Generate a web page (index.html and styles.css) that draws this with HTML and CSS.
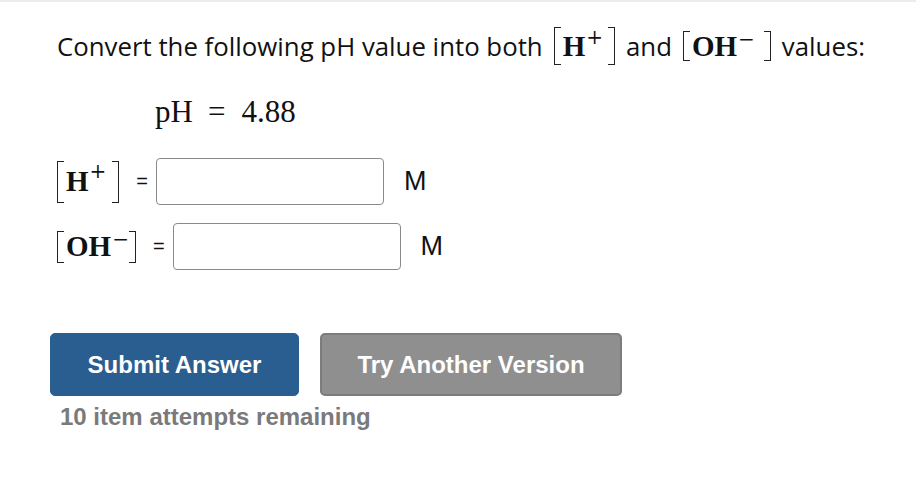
FILE: index.html
```html
<!DOCTYPE html>
<html>
<head>
<meta charset="utf-8">
<link rel="stylesheet" href="styles.css">
</head>
<body>
<div class="topbar"></div>
<div class="page">
  <p class="question"><span>Convert the following pH value into both</span><span class="math tall"><span class="br br-l"></span><b class="bf">H</b><sup class="sup">+</sup><span class="br br-r"></span></span><span>and</span><span class="math"><span class="br br-l short"></span><b class="bf">OH</b><sup class="sup minus">−</sup><span class="br br-r short"></span></span><span>values:</span></p>

  <div class="given">pH<span class="eq">=</span>4.88</div>

  <div class="row first">
    <span class="math label tall"><span class="br br-l"></span><b class="bf">H</b><sup class="sup">+</sup><span class="br br-r"></span></span>
    <span class="equals">=</span>
    <span class="box"></span>
    <span class="unit">M</span>
  </div>
  <div class="row">
    <span class="math label"><span class="br br-l short"></span><b class="bf">OH</b><sup class="sup minus">−</sup><span class="br br-r short"></span></span>
    <span class="equals">=</span>
    <span class="box"></span>
    <span class="unit">M</span>
  </div>

  <div class="actions">
    <button class="btn btn-primary">Submit Answer</button>
    <button class="btn btn-gray">Try Another Version</button>
  </div>
  <div class="remaining">10 item attempts remaining</div>
</div>
</body>
</html>
```
FILE: styles.css
```css
html, body { margin: 0; padding: 0; background: #fff; }
body { width: 916px; height: 480px; overflow: hidden; }
.topbar { height: 2px; background: #ececec; }
.page { padding: 0 0 0 57px; }
.question {
  margin: 24px 0 0 0;
  font-family: "Open Sans", sans-serif;
  font-size: 25.8px;
  color: #111;
  display: flex;
  align-items: center;
  gap: 11px;
  height: 40px;
  white-space: nowrap;
}
.math {
  display: inline-flex;
  align-items: center;
  font-family: "Liberation Serif", serif;
  font-size: 29px;
  color: #111;
  line-height: 1;
}
.bf { font-weight: bold; }
.sup {
  font-family: "DejaVu Serif", serif;
  font-size: 20px;
  font-weight: normal;
  align-self: flex-start;
  margin: 0 0 0 1px;
  line-height: 1;
}
.sup.minus { margin-top: -2px; }
.br {
  display: inline-block;
  width: 6px;
  height: 36px;
  border: 1.5px solid #222;
}
.br-l { border-right: none; margin-right: 2px; }
.br-r { border-left: none; margin-left: 5px; }
.br.short { height: 28px; }
.math .short.br-r { margin-left: 9px; }
.given {
  margin: 28px 0 0 98px;
  font-family: "Liberation Serif", serif;
  font-size: 31px;
  color: #111;
  height: 36px;
  line-height: 36px;
}
.eq { margin: 0 16px 0 15px; }
.row {
  display: flex;
  align-items: center;
  height: 65px;
}
.row.first { margin-top: 19px; }
.label.math { font-size: 29px; }
.label .br { height: 40px; }
.label .br-r { margin-left: 6px; }
.label .br.short { height: 30px; }
.label .short.br-r { margin-left: 0; }
.equals {
  font-family: "Liberation Sans", sans-serif;
  font-size: 20px;
  color: #111;
  margin: 0 8px 0 17px;
}
.box {
  display: inline-block;
  box-sizing: border-box;
  width: 228px;
  height: 47px;
  border: 1.5px solid #8a8a8a;
  border-radius: 4px;
  background: #fff;
}
.unit {
  font-family: "Liberation Sans", sans-serif;
  font-size: 27px;
  color: #111;
  margin-left: 20px;
}
.actions {
  display: flex;
  gap: 21px;
  margin: 54px 0 0 -7px;
}
.btn {
  height: 63px;
  border-radius: 5px;
  font-family: "Liberation Sans", sans-serif;
  font-weight: bold;
  font-size: 24px;
  color: #fff;
  cursor: pointer;
  box-sizing: border-box;
  padding: 0;
}
.btn-primary {
  width: 249px;
  background: #2a5e91;
  border: 1px solid #2a5e91;
}
.btn-gray {
  width: 302px;
  background: #8f8f8f;
  border: 2px solid #7c7c7c;
}
.remaining {
  margin: 7px 0 0 3px;
  font-family: "Liberation Sans", sans-serif;
  font-weight: bold;
  font-size: 24px;
  color: #7a7a7a;
}
```
